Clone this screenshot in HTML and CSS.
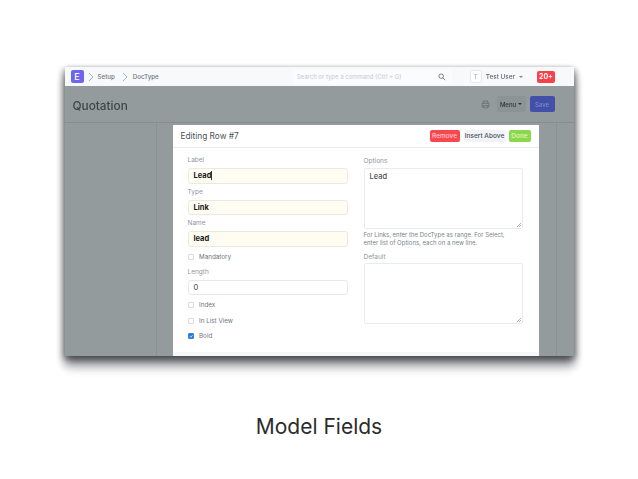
FILE: index.html
```html
<!DOCTYPE html>
<html lang="en">
<head>
<meta charset="utf-8">
<title>Model Fields</title>
<link rel="stylesheet" href="styles.css">
</head>
<body>
<main class="stage">
  <div class="window">
    <header class="navbar">
      <div class="logo">E</div>
      <svg class="crumb-sep" viewBox="0 0 6 10"><path d="M1 1l4 4-4 4"/></svg>
      <span class="crumb">Setup</span>
      <svg class="crumb-sep" viewBox="0 0 6 10"><path d="M1 1l4 4-4 4"/></svg>
      <span class="crumb">DocType</span>
      <div class="search">
        <span>Search or type a command (Ctrl + G)</span>
        <svg class="search-icon" viewBox="0 0 10 10"><circle cx="4" cy="4" r="2.8"/><path d="M6 6l3 3"/></svg>
      </div>
      <div class="avatar">T</div>
      <span class="user">Test User</span>
      <span class="caret"></span>
      <span class="badge">20+</span>
    </header>
    <div class="page-head">
      <h1>Quotation</h1>
      <div class="actions">
        <svg class="print" viewBox="0 0 12 12"><path d="M3 4V1.500h6V4M3 9H1.500V4.500h9V9H9M3 7.500h6v3H3z"/></svg>
        <span class="menu">Menu <i class="caret dark"></i></span>
        <span class="save">Save</span>
      </div>
    </div>
    <div class="page-body">
      <div class="rail"></div>
      <div class="rail-right"></div>
    </div>
    <section class="modal">
      <div class="modal-head">
        <h2>Editing Row #7</h2>
        <span class="btn red">Remove</span>
        <span class="btn light">Insert Above</span>
        <span class="btn green">Done</span>
      </div>
      <div class="modal-body">
        <div class="col">
          <label class="lbl">Label</label>
          <div class="input filled">Lead<i class="cursor"></i></div>
          <label class="lbl">Type</label>
          <div class="input filled">Link</div>
          <label class="lbl">Name</label>
          <div class="input filled">lead</div>
          <div class="check first"><i class="box"></i>Mandatory</div>
          <label class="lbl length">Length</label>
          <div class="input plain">0</div>
          <div class="check index"><i class="box"></i>Index</div>
          <div class="check list"><i class="box"></i>In List View</div>
          <div class="check"><i class="box on"><svg viewBox="0 0 8 8"><path d="M1.800 4.200l1.500 1.500 3-3.200"/></svg></i>Bold</div>
        </div>
        <div class="col">
          <label class="lbl options">Options</label>
          <div class="area">Lead<svg class="grip" viewBox="0 0 5 5"><path d="M0 5l5-5M2.500 5L5 2.500"/></svg></div>
          <p class="help">For Links, enter the DocType as range. For Select,<br>enter list of Options, each on a new line.</p>
          <label class="lbl default">Default</label>
          <div class="area"><svg class="grip" viewBox="0 0 5 5"><path d="M0 5l5-5M2.500 5L5 2.500"/></svg></div>
        </div>
      </div>
    </section>
  </div>
  <p class="caption">Model Fields</p>
</main>
</body>
</html>
```
FILE: styles.css
```css
* { box-sizing: border-box; }
html, body { margin: 0; height: 100%; background: #fff; }
body { font-family: Inter, "Liberation Sans", sans-serif; overflow: hidden; }
.stage { display: flex; flex-direction: column; align-items: center; padding-top: 67px; }
.window {
  position: relative; width: 509px; height: 289px; background: #939b9c;
  box-shadow: 0 7px 9px rgba(30,34,36,.6), 0 13px 10px rgba(30,34,36,.16), -2px 2px 6px rgba(30,34,36,.3), 2px 2px 6px rgba(30,34,36,.3);
  display: flex; flex-direction: column; filter: blur(.6px); opacity: .999; will-change: opacity;
}
.navbar { height: 19px; flex: none; background: #f8f9fb; display: flex; align-items: center; padding-left: 6px; font-size: 6px; color: #6c7680; }
.logo { width: 13px; height: 13px; border-radius: 2px; background: #6f66f0; color: #fff; font-size: 9px; font-weight: 500; display: flex; align-items: center; justify-content: center; margin-right: 4px; }
.crumb-sep { width: 6px; height: 10px; fill: none; stroke: #a9b1b8; stroke-width: 1; margin-right: 4px; }
.crumb { margin-right: 6px; font-weight: 500; font-size: 6.200px; }
.crumb + .crumb-sep { margin-left: 1px; margin-right: 5px; }
.search { margin-left: 128px; width: 159px; height: 14px; background: #fbfcfd; border-radius: 2px; display: flex; align-items: center; padding: 0 4px; color: #c4cad0; justify-content: space-between; }
.search-icon { width: 8px; height: 8px; fill: none; stroke: #68727a; stroke-width: 1.100; margin-right: 2px; }
.avatar { margin-left: 18px; width: 12px; height: 13px; border: 1px solid #e6e9ec; border-radius: 2px; background: #fff; color: #a0a8ae; display: flex; align-items: center; justify-content: center; font-size: 6px; }
.user { margin-left: 4px; font-weight: 500; color: #5f6971; font-size: 6.400px; }
.caret { width: 0; height: 0; border: 2px solid transparent; border-top-color: #7a848b; border-bottom: 0; margin-left: 4px; display: inline-block; }
.badge { margin-left: 14px; width: 18px; height: 12px; background: #f8414a; color: #fff; border-radius: 2px; font-size: 7px; font-weight: 700; display: flex; align-items: center; justify-content: center; }
.page-head { height: 37px; flex: none; border-bottom: 1px solid #868e8f; display: flex; align-items: center; justify-content: space-between; padding: 0 19px 0 8px; }
h1 { margin: 3px 0 0; font-size: 11.800px; font-weight: 500; color: #3e4548; }
.actions { display: flex; align-items: center; font-size: 6px; }
.print { width: 9px; height: 9px; fill: none; stroke: #5d6467; stroke-width: .9; }
.menu { margin-left: 7px; width: 29px; height: 16px; background: #8c9495; color: #2f3537; display: flex; align-items: center; justify-content: center; gap: 2px; border-radius: 2px; font-weight: 500; }
.caret.dark { border-top-color: #2f3537; margin-left: 0; }
.save { margin-left: 4px; width: 25px; height: 16px; background: #4350a8; color: #7f89cc; display: flex; align-items: center; justify-content: center; border-radius: 2px; font-weight: 500; }
.page-body { flex: 1; display: flex; justify-content: space-between; padding-left: 91px; padding-right: 17px; }
.rail, .rail-right { width: 1px; background: #899192; }
.modal { position: absolute; left: 108px; top: 58px; width: 366px; height: 231px; background: #fff; border-bottom: 4px solid #f6f7f9; }
.modal-head { height: 23px; border-bottom: 1px solid #e9ecef; display: flex; align-items: center; padding: 0 8px; gap: 4px; }
h2 { margin: 0 auto 0 0; font-size: 8.300px; font-weight: 400; color: #4a5258; }
.btn { height: 12px; border-radius: 2px; font-size: 6.500px; display: flex; align-items: center; justify-content: center; font-weight: 500; }
.red { width: 30px; background: #f8484f; color: #ffc9cb; }
.light { width: 42px; background: #f1f3f6; color: #4a5258; margin-right: -1px; }
.green { width: 22px; background: #8cd84b; color: #e2f6cf; }
.modal-body { display: grid; grid-template-columns: 160px 159px; column-gap: 16px; padding: 8px 0 0 15px; }
.col { display: flex; flex-direction: column; }
.lbl { font-size: 6.500px; line-height: 8px; height: 8px; color: #8f969c; margin-bottom: 4px; }
.length { margin-bottom: 3.500px; }
.options { position: relative; top: 1px; }
.input { height: 15.500px; border: 1px solid #e6e9ec; border-radius: 3px; padding: 0 5px; font-size: 7.500px; display: flex; align-items: center; color: #3c4449; margin-bottom: 4px; }
.filled { background: #fffdf2; font-weight: 700; color: #15191c; border-color: #eceadf; }
.cursor { width: 1px; height: 9px; background: #333; }
.plain { background: #fff; margin-bottom: 6px; }
.check { display: flex; align-items: center; gap: 5px; font-size: 6.300px; height: 8px; color: #6d767d; margin-bottom: 7px; }
.check.first { margin-top: 2.500px; }
.check.index { margin-bottom: 8px; }
.check.list { margin-bottom: 7px; }
.box { width: 6.500px; height: 6.500px; border: 1px solid #d6dade; border-radius: 1px; background: #fff; display: flex; flex: none; }
.box.on { background: #2f7fe0; border-color: #2f7fe0; }
.box svg { width: 100%; height: 100%; fill: none; stroke: #fff; stroke-width: 1.300; }
.area { position: relative; height: 61px; border: 1px solid #e9ecef; border-radius: 2px; padding: 3px 5px; font-size: 7.500px; line-height: 10px; color: #4a5258; font-weight: 500; }
.grip { position: absolute; right: 1px; bottom: 1px; width: 4px; height: 4px; fill: none; stroke: #777; stroke-width: .7; }
.help { margin: 2px 0 0; font-size: 6px; line-height: 8px; height: 16px; color: #7b848b; }
.default { margin-top: 6px; margin-bottom: 2px; }
.caption { margin: 58px 0 0; font-size: 21px; line-height: 26px; color: #2b2b2b; font-weight: 400; }
```
